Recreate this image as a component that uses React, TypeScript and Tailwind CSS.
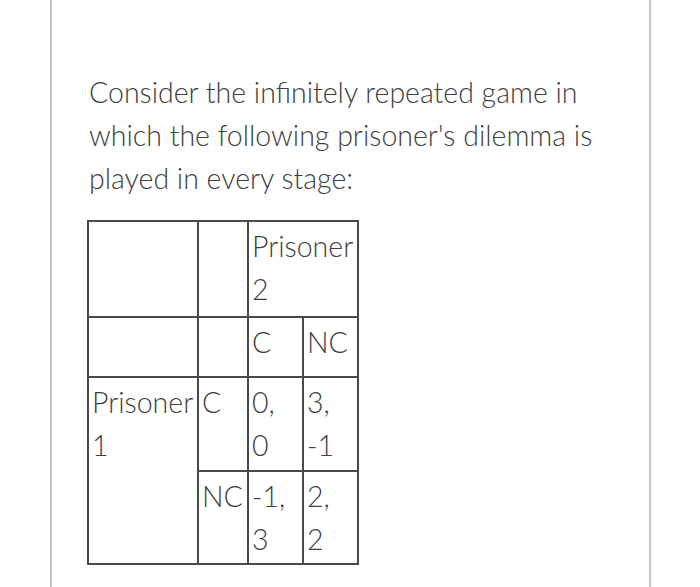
import React from "react";

const cell =
  "border-2 border-[#4a4a4a] align-top px-[3px] pt-[3px] text-[28.5px] leading-[43px] font-light";

export default function App() {
  return (
    <div className="w-[700px] h-[587px] bg-white overflow-hidden" style={{ fontFamily: "Lato, 'Noto Sans', sans-serif" }}>
      <div className="ml-[50px] w-[601px] h-full border-x-2 border-[#c6c6c6] pl-[37px] pt-[71px] text-[#404040]">
        <p className="w-[522px] text-[28.5px] leading-[43px] font-light">
          Consider the infinitely repeated game in which the following prisoner's dilemma is played in every stage:
        </p>
        <table className="mt-[20px] -ml-[2px] border-collapse table-fixed w-[270px]">
          <colgroup>
            <col className="w-[110px]" />
            <col className="w-[50px]" />
            <col className="w-[55px]" />
            <col className="w-[55px]" />
          </colgroup>
          <tbody>
            <tr className="h-[96px]">
              <td className={cell}></td>
              <td className={cell}></td>
              <td className={cell} colSpan={2}>
                Prisoner
                <br />2
              </td>
            </tr>
            <tr className="h-[60px]">
              <td className={cell}></td>
              <td className={cell}></td>
              <td className={cell}>C</td>
              <td className={cell}>NC</td>
            </tr>
            <tr className="h-[94px]">
              <td className={cell} rowSpan={2}>
                Prisoner
                <br />1
              </td>
              <td className={cell}>C</td>
              <td className={cell}>
                0,
                <br />0
              </td>
              <td className={cell}>
                3,
                <br />-1
              </td>
            </tr>
            <tr className="h-[93px]">
              <td className={cell}>NC</td>
              <td className={cell}>
                -1,
                <br />3
              </td>
              <td className={cell}>
                2,
                <br />2
              </td>
            </tr>
          </tbody>
        </table>
      </div>
    </div>
  );
}
